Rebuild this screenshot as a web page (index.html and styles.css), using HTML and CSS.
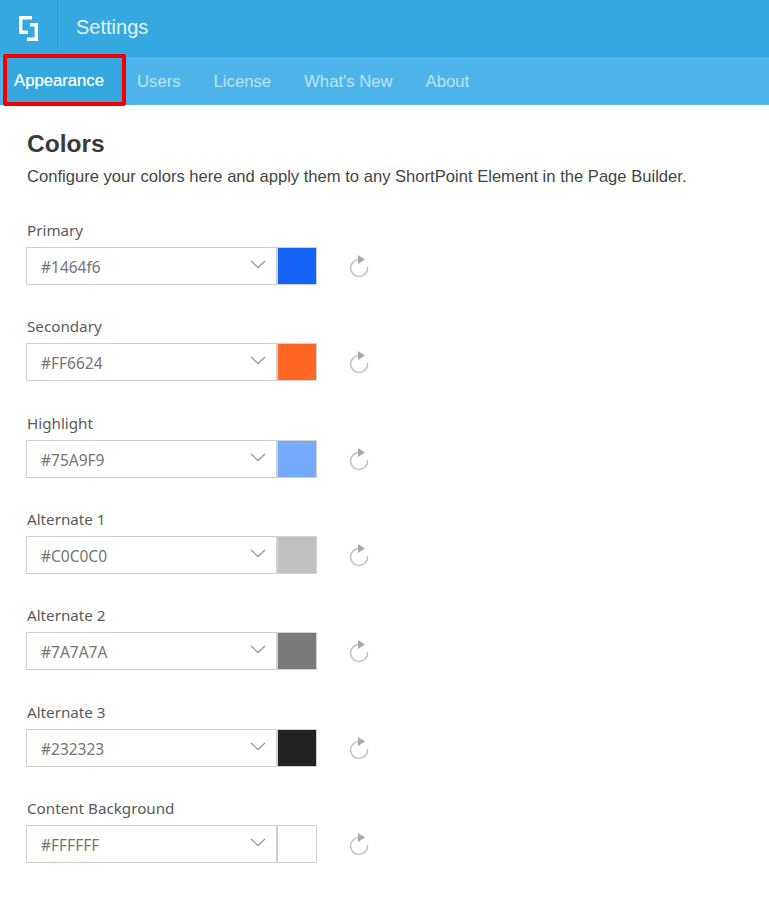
FILE: index.html
```html
<!DOCTYPE html>
<html lang="en">
<head>
    <meta charset="UTF-8">
    <title>Settings</title>
    <link rel="stylesheet" href="styles.css">
</head>
<body>
<div class="topbar">
    <div class="logo">
        <svg width="19" height="25" viewBox="0 0 19 25" fill="none" stroke="#fff" stroke-width="3.4">
            <path d="M13 1.7H1.7V16.3H9"/>
            <path d="M11 8.7H17.3V23.3H8"/>
        </svg>
    </div>
    <div class="title">Settings</div>
</div>
<ul class="tabs">
    <li class="on">Appearance</li>
    <li>Users</li>
    <li>License</li>
    <li>What's New</li>
    <li>About</li>
</ul>
<div class="content">
    <h1>Colors</h1>
    <p class="intro">Configure your colors here and apply them to any ShortPoint Element in the Page Builder.</p>

    <div class="color-row">
        <label>Primary</label>
        <div class="picker">
            <div class="select"><span>#1464f6</span><svg class="arrow" width="16" height="9" viewBox="0 0 16 9"><path d="M1 1l7 6.5L15 1"/></svg></div>
            <div class="swatch swatch-primary"></div>
            <svg class="reset" width="22" height="24" viewBox="0 0 22 24"><path class="ring" d="M10.5 5.5A8.5 8.5 0 1 0 19.5 13"/><path class="head" d="M10 1l7 4.5-7 4.5z"/></svg>
        </div>
    </div>
    <div class="color-row">
        <label>Secondary</label>
        <div class="picker">
            <div class="select"><span>#FF6624</span><svg class="arrow" width="16" height="9" viewBox="0 0 16 9"><path d="M1 1l7 6.5L15 1"/></svg></div>
            <div class="swatch swatch-secondary"></div>
            <svg class="reset" width="22" height="24" viewBox="0 0 22 24"><path class="ring" d="M10.5 5.5A8.5 8.5 0 1 0 19.5 13"/><path class="head" d="M10 1l7 4.5-7 4.5z"/></svg>
        </div>
    </div>
    <div class="color-row">
        <label>Highlight</label>
        <div class="picker">
            <div class="select"><span>#75A9F9</span><svg class="arrow" width="16" height="9" viewBox="0 0 16 9"><path d="M1 1l7 6.5L15 1"/></svg></div>
            <div class="swatch swatch-highlight"></div>
            <svg class="reset" width="22" height="24" viewBox="0 0 22 24"><path class="ring" d="M10.5 5.5A8.5 8.5 0 1 0 19.5 13"/><path class="head" d="M10 1l7 4.5-7 4.5z"/></svg>
        </div>
    </div>
    <div class="color-row">
        <label>Alternate 1</label>
        <div class="picker">
            <div class="select"><span>#C0C0C0</span><svg class="arrow" width="16" height="9" viewBox="0 0 16 9"><path d="M1 1l7 6.5L15 1"/></svg></div>
            <div class="swatch swatch-alt1"></div>
            <svg class="reset" width="22" height="24" viewBox="0 0 22 24"><path class="ring" d="M10.5 5.5A8.5 8.5 0 1 0 19.5 13"/><path class="head" d="M10 1l7 4.5-7 4.5z"/></svg>
        </div>
    </div>
    <div class="color-row">
        <label>Alternate 2</label>
        <div class="picker">
            <div class="select"><span>#7A7A7A</span><svg class="arrow" width="16" height="9" viewBox="0 0 16 9"><path d="M1 1l7 6.5L15 1"/></svg></div>
            <div class="swatch swatch-alt2"></div>
            <svg class="reset" width="22" height="24" viewBox="0 0 22 24"><path class="ring" d="M10.5 5.5A8.5 8.5 0 1 0 19.5 13"/><path class="head" d="M10 1l7 4.5-7 4.5z"/></svg>
        </div>
    </div>
    <div class="color-row">
        <label>Alternate 3</label>
        <div class="picker">
            <div class="select"><span>#232323</span><svg class="arrow" width="16" height="9" viewBox="0 0 16 9"><path d="M1 1l7 6.5L15 1"/></svg></div>
            <div class="swatch swatch-alt3"></div>
            <svg class="reset" width="22" height="24" viewBox="0 0 22 24"><path class="ring" d="M10.5 5.5A8.5 8.5 0 1 0 19.5 13"/><path class="head" d="M10 1l7 4.5-7 4.5z"/></svg>
        </div>
    </div>
    <div class="color-row">
        <label>Content Background</label>
        <div class="picker">
            <div class="select"><span>#FFFFFF</span><svg class="arrow" width="16" height="9" viewBox="0 0 16 9"><path d="M1 1l7 6.5L15 1"/></svg></div>
            <div class="swatch swatch-bg"></div>
            <svg class="reset" width="22" height="24" viewBox="0 0 22 24"><path class="ring" d="M10.5 5.5A8.5 8.5 0 1 0 19.5 13"/><path class="head" d="M10 1l7 4.5-7 4.5z"/></svg>
        </div>
    </div>
</div>
</body>
</html>
```

FILE: styles.css
```css
*{margin: 0px;padding: 0px;box-sizing: border-box;}
body{
    background: #fff;
    font-family: "Liberation Sans", Arial, sans-serif;
    color: #333;
}
.topbar{
    height: 57px;
    background: #35a8e0;
    display: flex;
    align-items: center;
}
.logo{
    width: 58px;
    height: 57px;
    border-right: 1px solid #31a0d8;
    display: flex;
    align-items: center;
    justify-content: center;
}
.title{
    margin-left: 18px;
    padding-bottom: 2px;
    font-size: 20px;
    color: #e3f3fb;
}
.tabs{
    height: 48px;
    background: #4db5ea;
    border-bottom: 1px solid #5ab8e8;
    display: flex;
    list-style: none;
    align-items: stretch;
}
.tabs li{
    font-size: 16.7px;
    color: #bfe3f7;
    display: flex;
    align-items: center;
    padding: 2px 16.5px 0;
}
.tabs li.on{
    margin: -3px -5.5px 0 3px;
    padding: 2px 18px 0 7px;
    height: 52px;
    color: #f2fafe;
    background: #35a8e0;
    border: 4px solid #f50000;
    border-radius: 2px;
    text-shadow: 0 0 0.5px #fff;
}
.content{
    padding: 25px 26px 0;
}
h1{
    padding-left: 1px;
    font-size: 24.5px;
    line-height: 27px;
    color: #3a3a3a;
}
.intro{
    margin-top: 10px;
    padding-left: 1px;
    font-size: 16.6px;
    line-height: 20px;
    color: #444;
    margin-bottom: 33px;
}
.color-row{
    height: 96.33px;
}
.color-row label{
    display: block;
    padding-left: 1px;
    font-family: "Noto Sans", sans-serif;
    font-size: 15.2px;
    line-height: 20px;
    color: #5a5a5a;
    margin-bottom: 7px;
}
.picker{
    display: flex;
    align-items: center;
}
.select{
    width: 252px;
    height: 38px;
    border: 1px solid #d0d0d0;
    border-right-width: 2px;
    display: flex;
    align-items: center;
    justify-content: space-between;
    padding: 2px 10px 0 14px;
    font-family: "Noto Sans", sans-serif;
    font-size: 15.5px;
    color: #757575;
}
.arrow{
    margin: -5px 0 0;
    fill: none;
    stroke: #999;
    stroke-width: 1.3;
}
.swatch{
    width: 39px;
    height: 38px;
    border: 1px solid #d0d0d0;
    border-left: 0;
}
.swatch-primary{background: #1464f6;}
.swatch-secondary{background: #ff6624;}
.swatch-highlight{background: #75a9f9;}
.swatch-alt1{background: #c0c0c0;}
.swatch-alt2{background: #7a7a7a;}
.swatch-alt3{background: #232323;}
.swatch-bg{background: #fff;}
.reset{
    margin-left: 31px;
}
.ring{
    fill: none;
    stroke: #c4c4c4;
    stroke-width: 1.6;
}
.head{
    fill: #aaa;
}
```
